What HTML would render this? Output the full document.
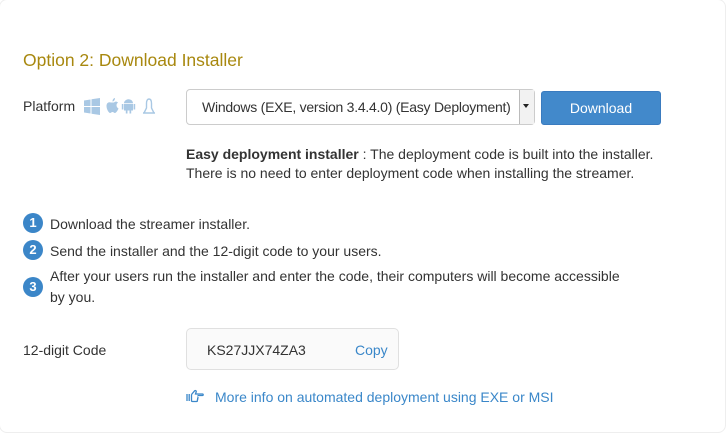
<!DOCTYPE html>
<html><head><style>
body{margin:0;width:726px;height:433px;background:#fff;font-family:"Liberation Sans",Arial,sans-serif;color:#333;overflow:hidden;position:relative}
.card{position:absolute;left:-1px;top:-1px;width:727px;height:434px;border:1px solid #eee;border-radius:8px;box-sizing:border-box}
.a{position:absolute;white-space:nowrap}
.t{font-size:17.5px;color:#a8880f;left:23px;top:50px}
.l{font-size:14px}
.sel{left:186px;top:89px;width:349px;height:36px;border:1px solid #ccc;border-radius:4px;box-sizing:border-box;font-size:14px;color:#333}
.btn{left:541px;top:91px;width:120px;height:34px;background:#4289cb;border:1px solid #3a7bbf;border-radius:3px;box-sizing:border-box;color:#fff;font-size:14px;text-align:center;line-height:32px}
.n{position:absolute;left:23px;width:20px;height:20px;border-radius:50%;background:#3b86c8;color:#fff;font-weight:bold;font-size:13px;text-align:center;line-height:20px}
.code{left:186px;top:328px;width:213px;height:42px;border:1px solid #e0e0e0;border-radius:5px;background:#fafafa;box-sizing:border-box}
.blue{color:#3a87c9}
</style></head><body>
<div class="card"></div>
<div class="a t">Option 2: Download Installer</div>
<div class="a l" style="left:23px;top:98px">Platform</div>
<svg class="a" style="left:83px;top:97px" width="80" height="18" viewBox="0 0 80 18">
<g fill="#a9c8e4">
<path d="M1 3.5l6.5-1v6.5H1zM8.5 2.3l8.5-1.3v8H8.5zM1 10h6.5v6.5l-6.5-1zM8.5 10H17v8l-8.5-1.3z"/>
<path d="M28 5.5c-2.5-1-4.5 0.5-4.5 3.5 0 3.5 2.5 7 3.5 7s1.5-1 2.5-1 1.5 1 2.5 1 3-3 3.5-4.5c-1.2-.8-2-2-2-3.3s1-2.2 1.5-2.7c-1.2-1.2-3-1.2-4 0zM29.5 4.5c0-2 1.2-3.5 2.5-3.5 0 2-1.2 3.5-2.5 3.5z"/>
<path d="M41 7h9v6.5h-9zM38.8 7h1.6v5.5h-1.6zM50.6 7h1.6v5.5h-1.6zM42.8 13h1.7v3.5h-1.7zM46.5 13h1.7v3.5h-1.7zM41 6.3c0-2.2 2-4 4.5-4s4.5 1.8 4.5 4z"/>
</g>
<path d="M61 16l2.5-5 0-4.5c0-3 1-4.5 2.5-4.5s2.5 1.5 2.5 4.5l0 4.5 2.5 5zM60 16h5M67 16h5" stroke="#a9c8e4" stroke-width="1.4" fill="none"/>
</svg>
<div class="a sel"><span style="position:absolute;left:15px;top:9px;letter-spacing:-0.25px">Windows (EXE, version 3.4.4.0) (Easy Deployment)</span>
<div style="position:absolute;right:0;top:0;width:14px;height:34px;border-left:1px solid #bbb;background:#f2f2f2"><div style="position:absolute;left:3px;top:14px;border:3.5px solid transparent;border-top:4px solid #222"></div></div></div>
<div class="a btn">Download</div>
<div class="a l" style="left:186px;top:145px;line-height:19px"><b>Easy deployment installer</b> : The deployment code is built into the installer.<br>There is no need to enter deployment code when installing the streamer.</div>
<div class="n" style="top:213px">1</div><div class="a l" style="left:50px;top:216px">Download the streamer installer.</div>
<div class="n" style="top:240px">2</div><div class="a l" style="left:50px;top:243px">Send the installer and the 12-digit code to your users.</div>
<div class="n" style="top:277px">3</div><div class="a l" style="left:50px;top:266px;line-height:21px">After your users run the installer and enter the code, their computers will become accessible<br>by you.</div>
<div class="a l" style="left:23px;top:342px">12-digit Code</div>
<div class="a code"><span class="l" style="position:absolute;left:20px;top:13px">KS27JJX74ZA3</span><span class="l blue" style="position:absolute;left:168px;top:13px">Copy</span></div>
<svg class="a" style="left:186px;top:389px" width="18" height="14" viewBox="0 0 18 14" fill="none" stroke="#3a87c9" stroke-width="1.3">
<path d="M1 5v7M3.2 5v7"/>
<path d="M5.5 5.5L8.5 2c.8-.8 2-.3 1.7.8L9.5 5H16.5c.9 0 .9 1.5 0 1.5H11.5"/>
<path d="M5.5 5.5v6c0 .6.4 1 1 1h4.2c.9 0 .9-1.4 0-1.4h.3c.9 0 .9-1.5 0-1.5h.3c.9 0 .9-1.6 0-1.6"/>
</svg>
<div class="a l blue" style="left:215px;top:389px">More info on automated deployment using EXE or MSI</div>
</body></html>
